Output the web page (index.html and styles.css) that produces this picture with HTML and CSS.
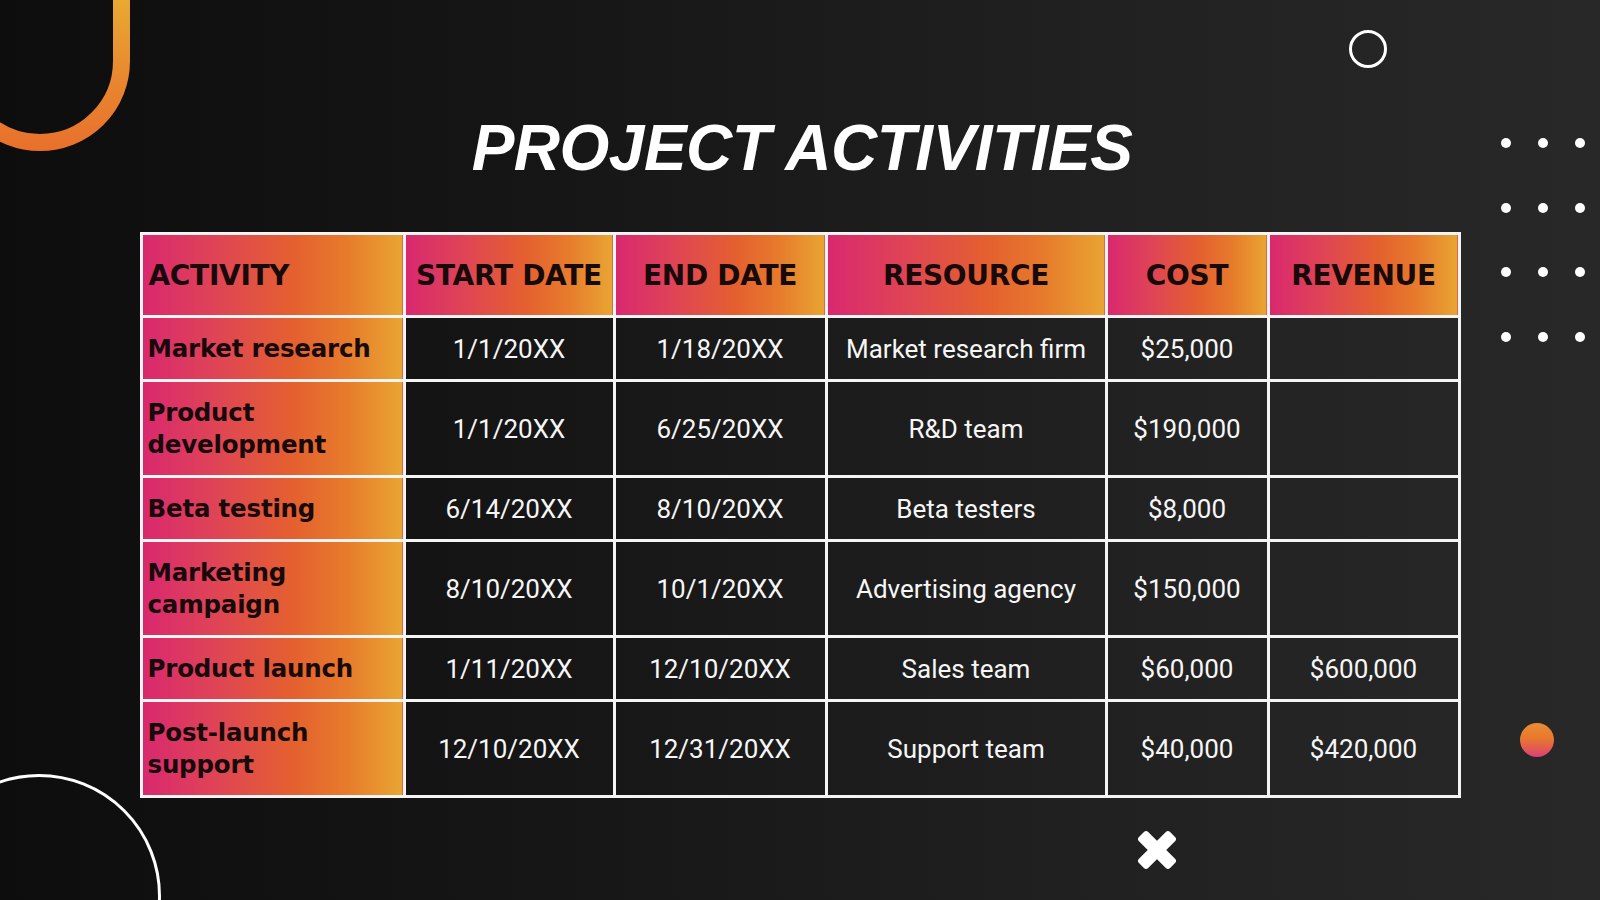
FILE: index.html
```html
<!DOCTYPE html>
<html lang="en">
<head>
<meta charset="utf-8">
<title>Project Activities</title>
<link rel="stylesheet" href="styles.css">
</head>
<body>
<div class="slide">
  <svg class="deco-u" width="140" height="160" viewBox="0 0 140 160">
    <defs>
      <linearGradient id="ug" x1="0" y1="0" x2="0" y2="150" gradientUnits="userSpaceOnUse">
        <stop offset="0" stop-color="#e8a932"/>
        <stop offset="0.55" stop-color="#e8862f"/>
        <stop offset="1" stop-color="#e8702c"/>
      </linearGradient>
    </defs>
    <path d="M121.5 -5 V61 A81.5 81.5 0 0 1 -41.5 61" fill="none" stroke="url(#ug)" stroke-width="17"/>
  </svg>
  <div class="deco-ring"></div>
  <div class="deco-dots">
    <span></span><span></span><span></span>
    <span></span><span></span><span></span>
    <span></span><span></span><span></span>
    <span></span><span></span><span></span>
  </div>
  <div class="deco-ball"></div>
  <svg class="deco-x" width="42" height="42" viewBox="0 0 42 42">
    <g transform="rotate(45 21 21)" fill="#ffffff">
      <rect x="14.5" y="-1" width="13" height="44" rx="3"/>
      <rect x="-1" y="14.5" width="44" height="13" rx="3"/>
    </g>
  </svg>
  <div class="deco-arc"></div>

  <h1 class="title">PROJECT ACTIVITIES</h1>

  <table class="grid">
    <colgroup>
      <col class="c1"><col class="c2"><col class="c3"><col class="c4"><col class="c5"><col class="c6">
    </colgroup>
    <thead>
      <tr class="r-head">
        <th class="hd left">ACTIVITY</th>
        <th class="hd">START DATE</th>
        <th class="hd">END DATE</th>
        <th class="hd">RESOURCE</th>
        <th class="hd">COST</th>
        <th class="hd">REVENUE</th>
      </tr>
    </thead>
    <tbody>
      <tr class="r-short">
        <td class="act">Market research</td>
        <td>1/1/20XX</td><td>1/18/20XX</td><td>Market research firm</td><td>$25,000</td><td></td>
      </tr>
      <tr class="r-tall">
        <td class="act">Product<br>development</td>
        <td>1/1/20XX</td><td>6/25/20XX</td><td>R&amp;D team</td><td>$190,000</td><td></td>
      </tr>
      <tr class="r-short">
        <td class="act">Beta testing</td>
        <td>6/14/20XX</td><td>8/10/20XX</td><td>Beta testers</td><td>$8,000</td><td></td>
      </tr>
      <tr class="r-tall">
        <td class="act">Marketing<br>campaign</td>
        <td>8/10/20XX</td><td>10/1/20XX</td><td>Advertising agency</td><td>$150,000</td><td></td>
      </tr>
      <tr class="r-short">
        <td class="act">Product launch</td>
        <td>1/11/20XX</td><td>12/10/20XX</td><td>Sales team</td><td>$60,000</td><td>$600,000</td>
      </tr>
      <tr class="r-tall">
        <td class="act">Post-launch<br>support</td>
        <td>12/10/20XX</td><td>12/31/20XX</td><td>Support team</td><td>$40,000</td><td>$420,000</td>
      </tr>
    </tbody>
  </table>
</div>
</body>
</html>
```

FILE: styles.css
```css
html, body {
  margin: 0;
  padding: 0;
}

body {
  width: 1600px;
  height: 900px;
  overflow: hidden;
  background: #111;
}

.slide {
  position: relative;
  width: 1600px;
  height: 900px;
  overflow: hidden;
  box-sizing: border-box;
  padding-top: 116px;
  display: flex;
  flex-direction: column;
  align-items: center;
  background: linear-gradient(90deg, #0d0d0d 0%, #161616 35%, #212121 70%, #282828 100%);
  font-family: Roboto, "Liberation Sans", sans-serif;
}

.title {
  margin: 0 0 52px 0;
  font-family: "Liberation Sans", Arial, sans-serif;
  font-weight: 700;
  font-style: italic;
  font-size: 64px;
  line-height: 64px;
  letter-spacing: -0.5px;
  color: #ffffff;
  position: relative;
  left: 2px;
}

.grid {
  width: 1318px;
  table-layout: fixed;
  border-collapse: collapse;
  border: 3px solid #ffffff;
}

.c1 { width: 263px; }
.c2 { width: 210px; }
.c3 { width: 212px; }
.c4 { width: 280px; }
.c5 { width: 162px; }
.c6 { width: 191px; }

.grid th,
.grid td {
  border: 3px solid #f4f4f4;
  padding: 0 6px;
  vertical-align: middle;
  text-align: center;
  white-space: nowrap;
}

.r-head { height: 83px; }
.r-short { height: 64px; }
.r-tall { height: 96px; }

.grid td {
  color: #f6f6f6;
  font-family: Roboto, "Liberation Sans", sans-serif;
  font-size: 26px;
  font-weight: 400;
  padding-top: 1px;
}

.hd,
.grid td.act {
  background: linear-gradient(90deg, #d9286f 0%, #df4456 28%, #e4602f 58%, #e77a2c 78%, #e8a532 100%);
  color: #170a0b;
}

.hd {
  font-family: "DejaVu Sans", Verdana, sans-serif;
  font-weight: 700;
  font-size: 28px;
  letter-spacing: -0.3px;
  padding-top: 1px;
}

.hd.left {
  text-align: left;
}

.grid td.act {
  text-align: left;
  font-family: "DejaVu Sans", Verdana, sans-serif;
  font-weight: 700;
  font-size: 24.5px;
  line-height: 32px;
  letter-spacing: -0.2px;
  padding-left: 5px;
  padding-top: 1px;
}

/* decorations on the free canvas */
.deco-u {
  position: absolute;
  left: 0;
  top: 0;
}

.deco-ring {
  position: absolute;
  left: 1349px;
  top: 30px;
  width: 38px;
  height: 38px;
  box-sizing: border-box;
  border: 3px solid #ffffff;
  border-radius: 50%;
}

.deco-dots {
  position: absolute;
  left: 1501px;
  top: 138px;
  display: grid;
  grid-template-columns: repeat(3, 10px);
  column-gap: 27px;
  row-gap: 54.7px;
}

.deco-dots span {
  display: block;
  width: 10px;
  height: 10px;
  border-radius: 50%;
  background: #ffffff;
}

.deco-ball {
  position: absolute;
  left: 1520px;
  top: 723px;
  width: 34px;
  height: 34px;
  border-radius: 50%;
  background: linear-gradient(180deg, #e98d33 0%, #e8782f 45%, #e25a52 75%, #dd3f76 100%);
}

.deco-x {
  position: absolute;
  left: 1136px;
  top: 829px;
}

.deco-arc {
  position: absolute;
  left: -83px;
  top: 774px;
  width: 244px;
  height: 244px;
  box-sizing: border-box;
  border: 3px solid #ffffff;
  border-radius: 50%;
}
```
